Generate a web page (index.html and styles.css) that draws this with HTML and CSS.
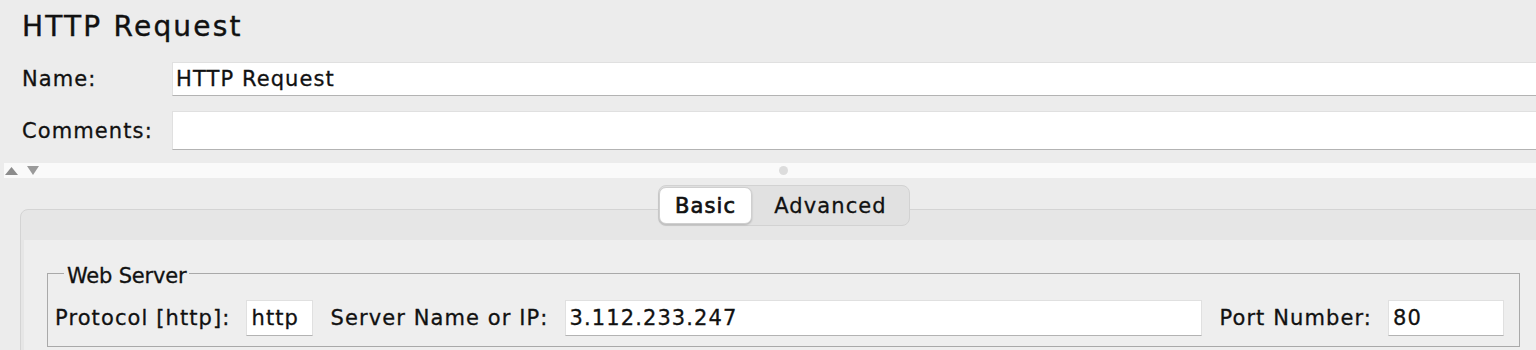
FILE: index.html
```html
<!DOCTYPE html>
<html lang="en">
<head>
    <meta charset="UTF-8">
    <title>HTTP Request</title>
    <link rel="stylesheet" href="styles.css">
</head>
<body>

    <h1 class="title">HTTP Request</h1>

    <div class="field-row name-row">
        <label for="name">Name:</label>
        <input id="name" class="text-input" type="text" value="HTTP Request">
    </div>
    <div class="field-row comments-row">
        <label for="comments">Comments:</label>
        <input id="comments" class="text-input comments-input" type="text" value="">
    </div>

    <!-- split pane divider -->
    <div class="splitter">
        <div class="arrows">
            <svg width="13" height="8" viewBox="0 0 13 8"><polygon points="6.5,0 13,8 0,8" fill="#8c8c8c"/></svg>
            <svg width="12" height="9" viewBox="0 0 12 9"><polygon points="0,0 12,0 6,9" fill="#9a9a9a"/></svg>
        </div>
        <div class="grip"></div>
        <div></div>
    </div>

    <div class="tabs">
        <div class="tab-bar">
            <div class="segmented">
                <span class="seg seg-active">Basic</span>
                <span class="seg">Advanced</span>
            </div>
        </div>
        <div class="tab-pane">
            <div class="tab-content">
                <div class="group">
                    <div class="group-title">Web Server</div>
                    <div class="server-row">
                        <label>Protocol [http]:</label>
                        <input class="text-input field protocol" type="text" value="http">
                        <label>Server Name or IP:</label>
                        <input class="text-input field server" type="text" value="3.112.233.247">
                        <label>Port Number:</label>
                        <input class="text-input field port" type="text" value="80">
                    </div>
                </div>
            </div>
        </div>
    </div>

</body>
</html>
```

FILE: styles.css
```css
html, body {
    margin: 0;
    overflow: hidden;
}
body {
    background-color: #ececec;
    font-family: "DejaVu Sans", sans-serif;
    font-size: 21px;
    letter-spacing: 1.1px;
    color: #111;
    -webkit-text-stroke: 0.3px #111;
}
.title {
    margin: 0;
    padding: 10px 0 0 22px;
    font-size: 28px;
    font-weight: normal;
    line-height: 34px;
    letter-spacing: 2.2px;
    -webkit-text-stroke: 0.4px #111;
}
.field-row {
    display: grid;
    grid-template-columns: 150px 1fr;
    align-items: center;
    margin: 0 -10px 0 22px;
}
.name-row { margin-top: 18px; }
.comments-row { margin-top: 15px; }
.text-input {
    box-sizing: border-box;
    width: 100%;
    height: 34px;
    padding: 0 4px 0 3px;
    border: 1px solid #e0e0e0;
    border-bottom-color: #b3b3b3;
    background-color: #fff;
    font: inherit;
    letter-spacing: inherit;
    color: inherit;
    outline: none;
}
.comments-input { height: 39px; }

.splitter {
    display: grid;
    grid-template-columns: 1fr auto 1fr;
    align-items: center;
    height: 15px;
    margin: 13px -26px 0 4px;
    background-color: #fafafa;
}
.arrows {
    display: flex;
    align-items: center;
    gap: 9px;
    padding-left: 1px;
}
.arrows svg { display: block; }
.grip {
    width: 9px;
    height: 9px;
    border-radius: 50%;
    background-color: #dcdcdc;
}

.tabs { margin: 7px -12px 0 20px; }
.tab-bar {
    display: flex;
    justify-content: center;
    position: relative;
    z-index: 1;
}
.segmented {
    display: flex;
    box-sizing: border-box;
    height: 41px;
    border: 1px solid #d2d2d2;
    border-radius: 8px;
    background-color: #e1e1e1;
}
.seg {
    display: flex;
    align-items: center;
    justify-content: center;
    width: 157px;
}
.seg-active {
    box-sizing: border-box;
    width: 93px;
    height: 37px;
    margin-top: 1px;
    border: 1px solid #cfcfcf;
    border-radius: 7px;
    background-color: #fff;
    box-shadow: 0 1px 2px rgba(0, 0, 0, 0.2);
    -webkit-text-stroke: 0.7px #111;
}
.tab-pane {
    margin-top: -17px;
    padding: 30px 3px 0 3px;
    border: 1px solid #d4d4d4;
    border-radius: 8px;
    background-color: #e6e6e6;
}
.tab-content {
    padding: 33px 24px 20px 23px;
    background-color: #eeeeee;
}
.group {
    padding: 0 15px 10px 7px;
    border: 1px solid #a9a9a9;
}
.group-title {
    width: fit-content;
    margin: -10px 0 0 9px;
    padding: 0 3px;
    line-height: 24px;
    letter-spacing: -0.2px;
    background-color: #eeeeee;
}
.server-row {
    display: flex;
    align-items: center;
    margin-top: 12px;
}
.server-row label { margin-right: 16px; }
.field {
    height: 36px;
    margin-right: 17px;
    padding-left: 4px;
}
.protocol { width: 67px; }
.server { flex: 1; }
.port { width: 116px; margin-right: 0; }
```
